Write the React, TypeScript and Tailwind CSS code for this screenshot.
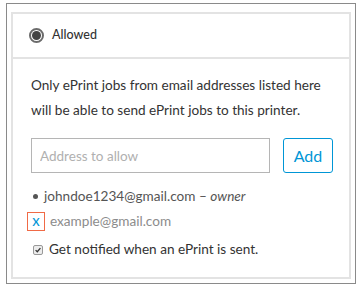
import { useState } from "react";

const font = { fontFamily: 'Lato, "Liberation Sans", sans-serif' };

export default function App() {
  const [notify, setNotify] = useState(true);

  return (
    <div className="h-[291px] w-[360px] bg-white pl-[6px] pr-[4px] pt-[3px] pb-[7px]" style={font}>
      <div className="h-full w-full border border-[#8a8a8a] px-[4px] pb-[4px] pt-[8px]">
        <div className="flex h-full flex-col border-2 border-[#e3e3e3]">
          <div className="flex h-[45px] items-center gap-[8px] border-b-2 border-[#e3e3e3] pl-[16px]">
            <span className="flex h-[15px] w-[15px] items-center justify-center rounded-full border-2 border-[#6b6b6b]">
              <span className="h-[9px] w-[9px] rounded-full bg-[#444]" />
            </span>
            <span className="text-[12.5px] font-medium text-[#333]">Allowed</span>
          </div>

          <div className="flex flex-col pl-[18px] pr-[8px] pt-[14px]">
            <p className="max-w-[298px] text-[13.6px] leading-[25px] text-[#333]">
              Only ePrint jobs from email addresses listed here will be able to send ePrint jobs to this printer.
            </p>

            <div className="mt-[15px] flex items-center gap-[13px]">
              <input
                className="h-[35px] w-[239px] border border-[#b5b5b5] px-[8px] text-[13.5px] text-[#333] outline-none placeholder:text-[#b0b0b0]"
                placeholder="Address to allow"
              />
              <button className="h-[35px] w-[50px] rounded-[3px] border border-[#0096d6] text-[16px] text-[#0096d6]">
                Add
              </button>
            </div>

            <div className="mt-[13px] flex items-center gap-[6px] pl-[2px] text-[13.6px] leading-[20px] text-[#555]">
              <span className="h-[5px] w-[5px] rounded-full bg-[#555]" />
              <span>
                johndoe1234@gmail.com – <i>owner</i>
              </span>
            </div>

            <div className="-ml-[4px] mt-[5px] flex items-center gap-[5px] text-[13.6px] text-[#8c8c8c]">
              <button className="flex h-[19px] w-[18px] items-center justify-center border border-[#f06a46] pb-[2px] text-[15px] leading-none text-[#0096d6]">
                x
              </button>
              <span>example@gmail.com</span>
            </div>

            <label className="mt-[8px] flex items-center gap-[6px] pl-[2px] text-[13.6px] text-[#333]">
              <input
                type="checkbox"
                checked={notify}
                onChange={(e) => setNotify(e.target.checked)}
                className="sr-only"
              />
              <span className="flex h-[10px] w-[10px] items-center justify-center rounded-[2px] border border-[#999] bg-[#ececec]">
                <svg viewBox="0 0 10 10" className="h-[8px] w-[8px]">
                  {notify && <path d="M2 5.2 L4.1 7.2 L8 2.6" fill="none" stroke="#333" strokeWidth="1.6" />}
                </svg>
              </span>
              Get notified when an ePrint is sent.
            </label>
          </div>
        </div>
      </div>
    </div>
  );
}
